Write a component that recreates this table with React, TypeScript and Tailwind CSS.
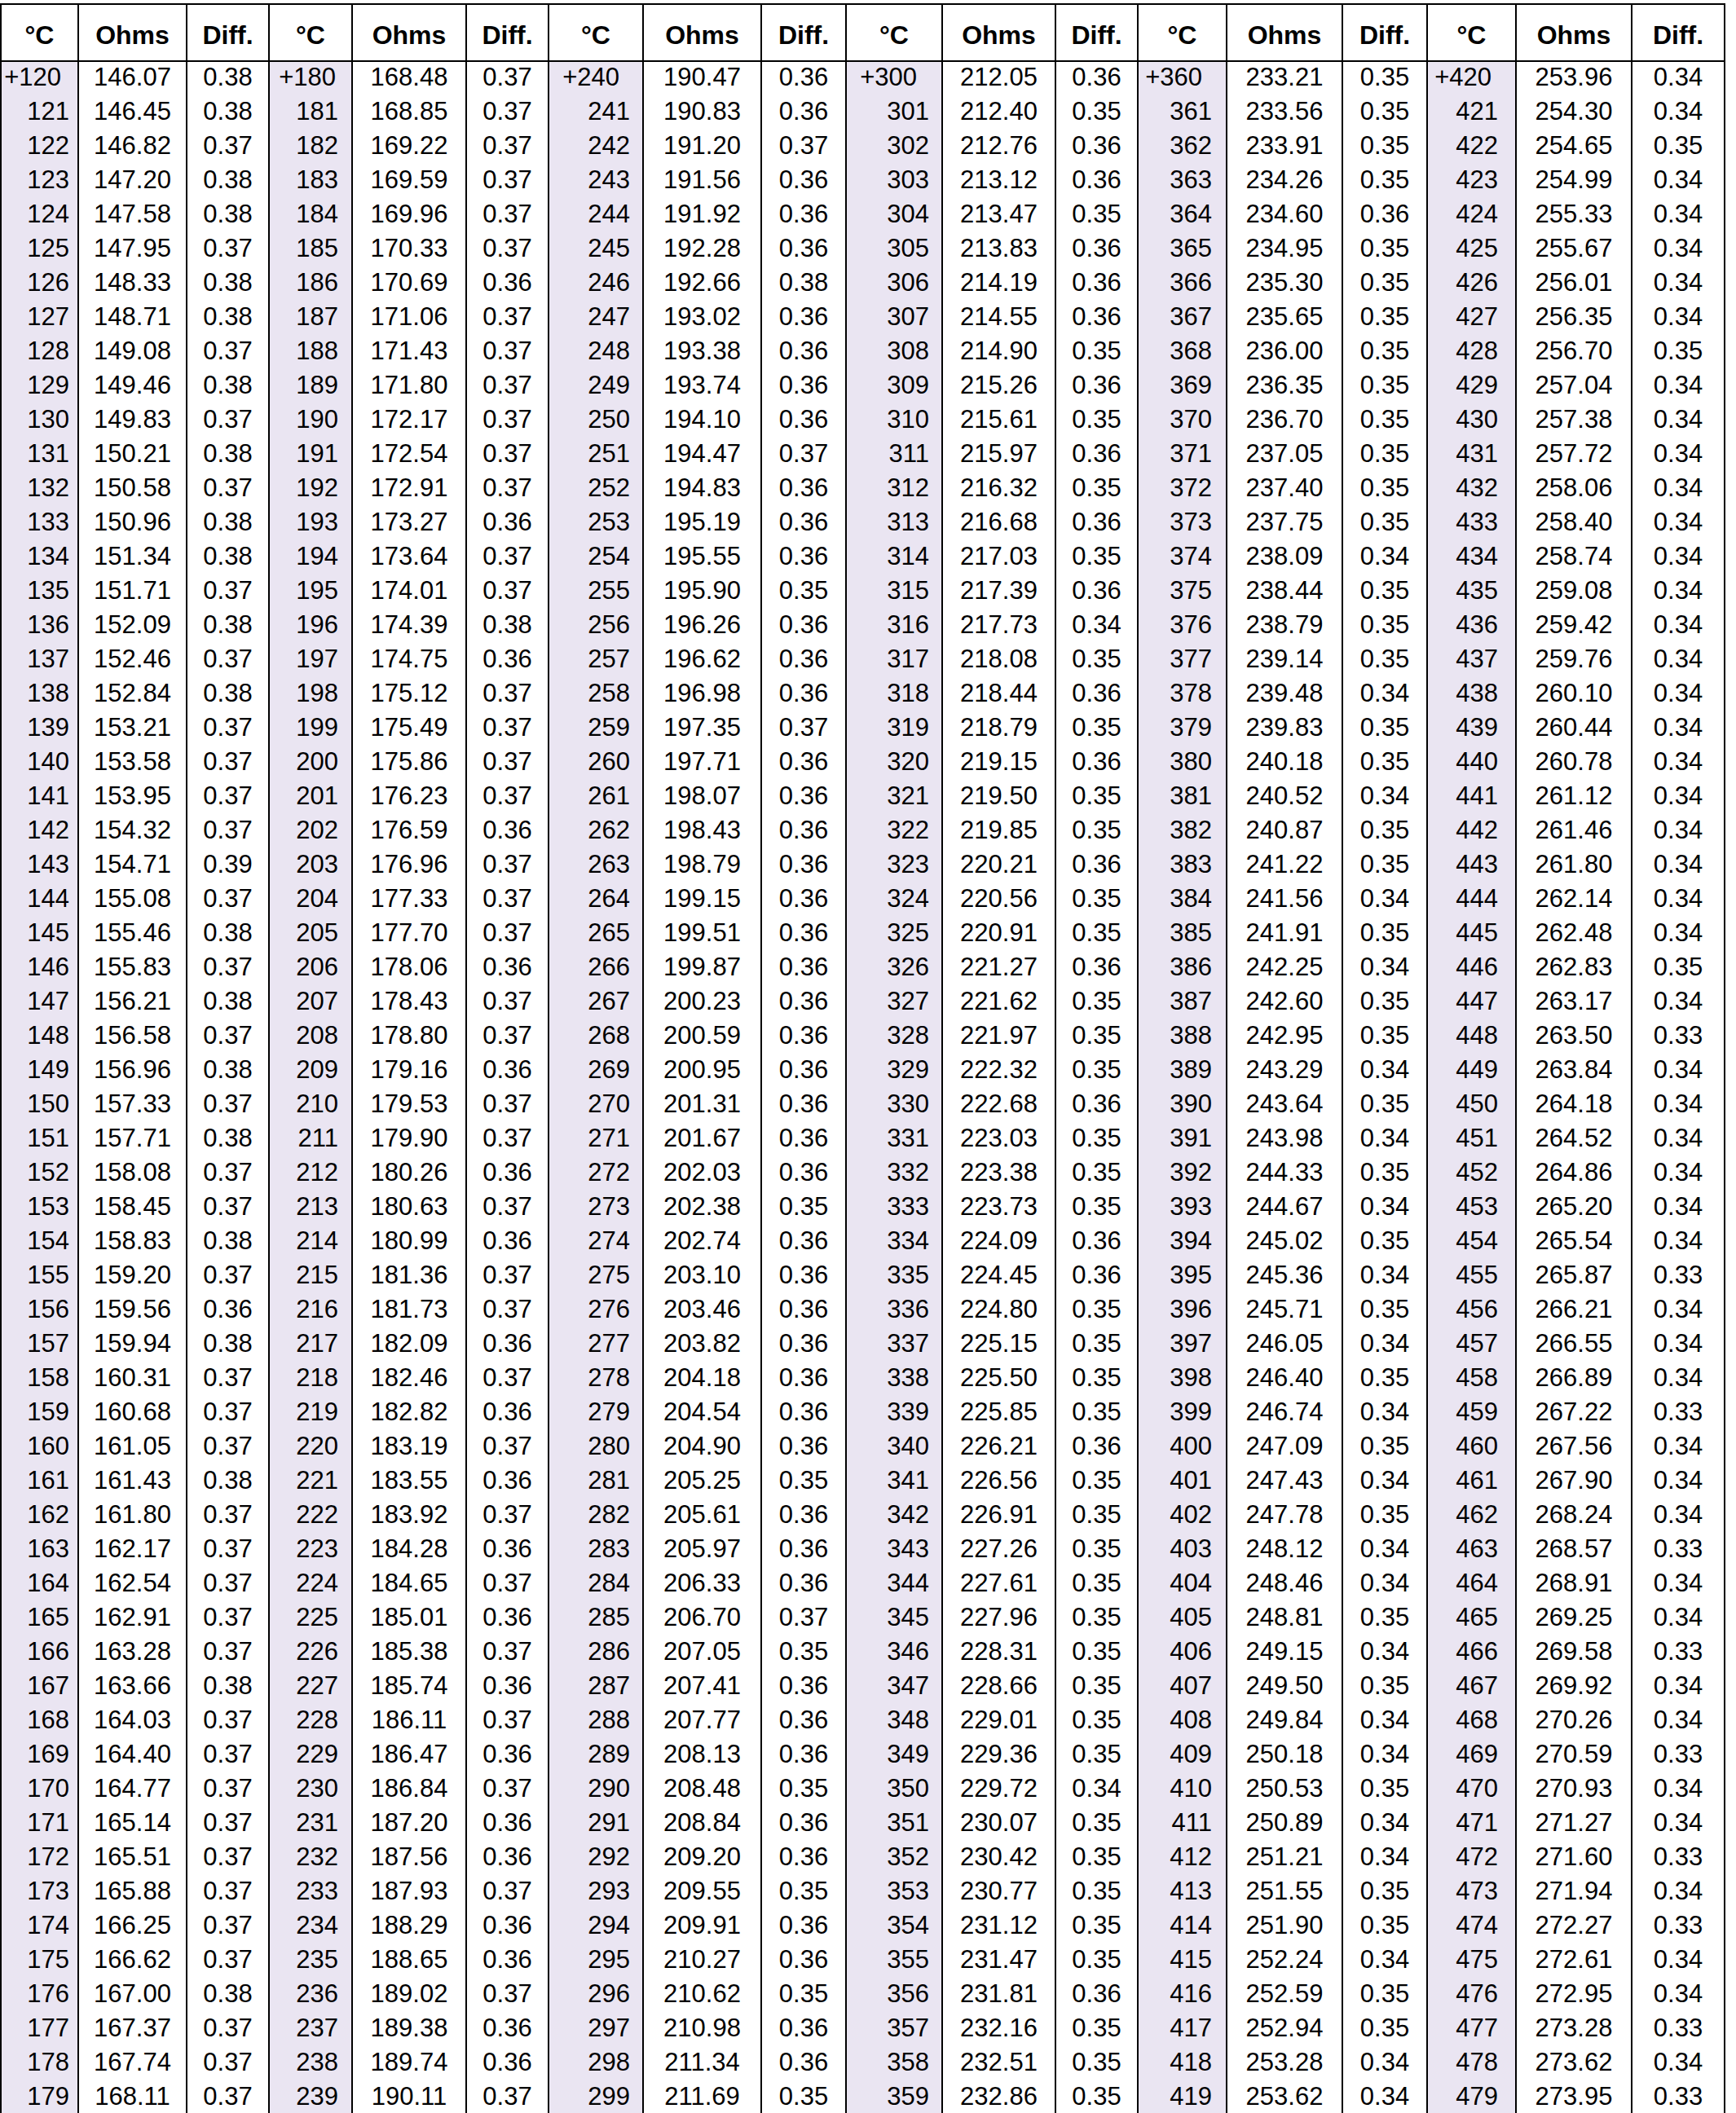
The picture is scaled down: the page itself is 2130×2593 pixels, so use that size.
const OHMS = [
  `146.07 146.45 146.82 147.20 147.58 147.95 148.33 148.71 149.08 149.46
   149.83 150.21 150.58 150.96 151.34 151.71 152.09 152.46 152.84 153.21
   153.58 153.95 154.32 154.71 155.08 155.46 155.83 156.21 156.58 156.96
   157.33 157.71 158.08 158.45 158.83 159.20 159.56 159.94 160.31 160.68
   161.05 161.43 161.80 162.17 162.54 162.91 163.28 163.66 164.03 164.40
   164.77 165.14 165.51 165.88 166.25 166.62 167.00 167.37 167.74 168.11`,
  `168.48 168.85 169.22 169.59 169.96 170.33 170.69 171.06 171.43 171.80
   172.17 172.54 172.91 173.27 173.64 174.01 174.39 174.75 175.12 175.49
   175.86 176.23 176.59 176.96 177.33 177.70 178.06 178.43 178.80 179.16
   179.53 179.90 180.26 180.63 180.99 181.36 181.73 182.09 182.46 182.82
   183.19 183.55 183.92 184.28 184.65 185.01 185.38 185.74 186.11 186.47
   186.84 187.20 187.56 187.93 188.29 188.65 189.02 189.38 189.74 190.11`,
  `190.47 190.83 191.20 191.56 191.92 192.28 192.66 193.02 193.38 193.74
   194.10 194.47 194.83 195.19 195.55 195.90 196.26 196.62 196.98 197.35
   197.71 198.07 198.43 198.79 199.15 199.51 199.87 200.23 200.59 200.95
   201.31 201.67 202.03 202.38 202.74 203.10 203.46 203.82 204.18 204.54
   204.90 205.25 205.61 205.97 206.33 206.70 207.05 207.41 207.77 208.13
   208.48 208.84 209.20 209.55 209.91 210.27 210.62 210.98 211.34 211.69`,
  `212.05 212.40 212.76 213.12 213.47 213.83 214.19 214.55 214.90 215.26
   215.61 215.97 216.32 216.68 217.03 217.39 217.73 218.08 218.44 218.79
   219.15 219.50 219.85 220.21 220.56 220.91 221.27 221.62 221.97 222.32
   222.68 223.03 223.38 223.73 224.09 224.45 224.80 225.15 225.50 225.85
   226.21 226.56 226.91 227.26 227.61 227.96 228.31 228.66 229.01 229.36
   229.72 230.07 230.42 230.77 231.12 231.47 231.81 232.16 232.51 232.86`,
  `233.21 233.56 233.91 234.26 234.60 234.95 235.30 235.65 236.00 236.35
   236.70 237.05 237.40 237.75 238.09 238.44 238.79 239.14 239.48 239.83
   240.18 240.52 240.87 241.22 241.56 241.91 242.25 242.60 242.95 243.29
   243.64 243.98 244.33 244.67 245.02 245.36 245.71 246.05 246.40 246.74
   247.09 247.43 247.78 248.12 248.46 248.81 249.15 249.50 249.84 250.18
   250.53 250.89 251.21 251.55 251.90 252.24 252.59 252.94 253.28 253.62`,
  `253.96 254.30 254.65 254.99 255.33 255.67 256.01 256.35 256.70 257.04
   257.38 257.72 258.06 258.40 258.74 259.08 259.42 259.76 260.10 260.44
   260.78 261.12 261.46 261.80 262.14 262.48 262.83 263.17 263.50 263.84
   264.18 264.52 264.86 265.20 265.54 265.87 266.21 266.55 266.89 267.22
   267.56 267.90 268.24 268.57 268.91 269.25 269.58 269.92 270.26 270.59
   270.93 271.27 271.60 271.94 272.27 272.61 272.95 273.28 273.62 273.95`,
];

// hundredths only, the table prints them as 0.xx
const DIFF = [
  `38 38 37 38 38 37 38 38 37 38  37 38 37 38 38 37 38 37 38 37
   37 37 37 39 37 38 37 38 37 38  37 38 37 37 38 37 36 38 37 37
   37 38 37 37 37 37 37 38 37 37  37 37 37 37 37 37 38 37 37 37`,
  `37 37 37 37 37 37 36 37 37 37  37 37 37 36 37 37 38 36 37 37
   37 37 36 37 37 37 36 37 37 36  37 37 36 37 36 37 37 36 37 36
   37 36 37 36 37 36 37 36 37 36  37 36 36 37 36 36 37 36 36 37`,
  `36 36 37 36 36 36 38 36 36 36  36 37 36 36 36 35 36 36 36 37
   36 36 36 36 36 36 36 36 36 36  36 36 36 35 36 36 36 36 36 36
   36 35 36 36 36 37 35 36 36 36  35 36 36 35 36 36 35 36 36 35`,
  `36 35 36 36 35 36 36 36 35 36  35 36 35 36 35 36 34 35 36 35
   36 35 35 36 35 35 36 35 35 35  36 35 35 35 36 36 35 35 35 35
   36 35 35 35 35 35 35 35 35 35  34 35 35 35 35 35 36 35 35 35`,
  `35 35 35 35 36 35 35 35 35 35  35 35 35 35 34 35 35 35 34 35
   35 34 35 35 34 35 34 35 35 34  35 34 35 34 35 34 35 34 35 34
   35 34 35 34 34 35 34 35 34 34  35 34 34 35 35 34 35 35 34 34`,
  `34 34 35 34 34 34 34 34 35 34  34 34 34 34 34 34 34 34 34 34
   34 34 34 34 34 34 35 34 33 34  34 34 34 34 34 33 34 34 34 33
   34 34 34 33 34 34 33 34 34 33  34 34 33 34 33 34 34 33 34 33`,
];

const groups = OHMS.map((s, g) => {
  const ohms = s.trim().split(/\s+/);
  const diffs = DIFF[g].trim().split(/\s+/);
  return ohms.map((o, i) => ({ t: 120 + g * 60 + i, ohms: o, diff: `0.${diffs[i]}` }));
});

// °C column sits right-aligned, each group set a little differently in the source
const degPad = ["pr-[10px]", "pr-[16px]", "pr-[15px]", "pr-[15px]", "pr-[17px]", "pr-[21px]"];
const firstPad = ["pr-[20px]", "pr-[19px]", "pr-[28px]", "pr-[30px]", "pr-[29px]", "pr-[29px]"];

const cell = "h-[42px] flex items-center pb-[4px] border-r-2 border-black text-[31px]";

export default function App() {
  return (
    <div className="min-h-screen bg-white pt-[4px] font-['Liberation_Sans',Arial,sans-serif] text-black">
      <div className="grid w-max grid-cols-[95px_133px_101px_102px_140px_101px_116px_145px_104px_118px_139px_101px_109px_142px_104px_109px_142px_114px] border-t-2 border-l-2 border-black">
        {groups.map((_, g) => (
          <HeaderCells key={g} />
        ))}

        {groups[0].map((_, r) =>
          groups.map((grp, g) => {
            const row = grp[r];
            return (
              <Row
                key={`${r}-${g}`}
                deg={r === 0 ? `+${row.t}` : String(row.t)}
                pad={r === 0 ? firstPad[g] : degPad[g]}
                ohms={row.ohms}
                diff={row.diff}
              />
            );
          })
        )}
      </div>
    </div>
  );
}

function HeaderCells() {
  const h = "h-[70px] flex items-center justify-center pt-[6px] border-r-2 border-b-2 border-black text-[32px] font-bold leading-none";
  return (
    <>
      <div className={h}>°C</div>
      <div className={h}>Ohms</div>
      <div className={h}>Diff.</div>
    </>
  );
}

function Row({ deg, pad, ohms, diff }: { deg: string; pad: string; ohms: string; diff: string }) {
  return (
    <>
      <div className={`${cell} justify-end bg-[#eae5f2] ${pad}`}>{deg}</div>
      <div className={`${cell} justify-center`}>{ohms}</div>
      <div className={`${cell} justify-center`}>{diff}</div>
    </>
  );
}
